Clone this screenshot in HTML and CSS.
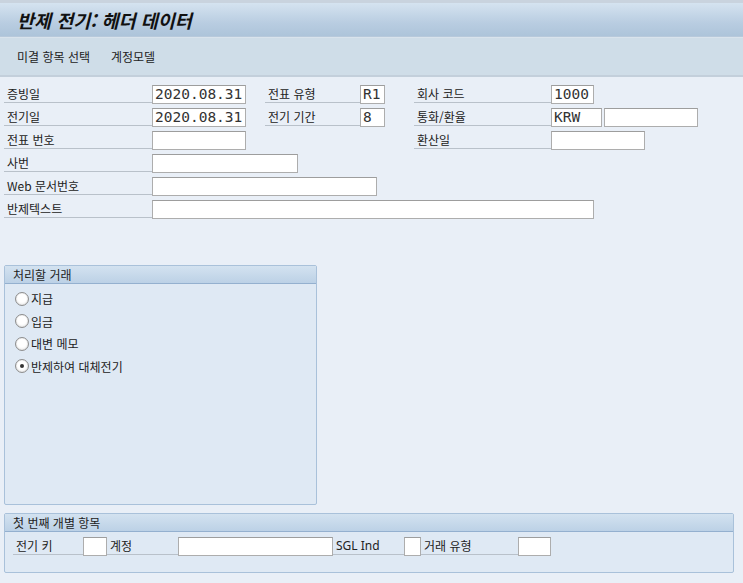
FILE: index.html
```html
<!DOCTYPE html>
<html lang="ko">
<head>
  <meta charset="UTF-8" />
  <title>반제 전기: 헤더 데이터</title>
  <link rel="stylesheet" href="styles.css">
</head>
<body>
  <div class="titlebar">
    <h1>반제 전기: 헤더 데이터</h1>
  </div>
  <div class="toolbar">
    <span class="tool">미결 항목 선택</span>
    <span class="tool">계정모델</span>
  </div>

  <div class="form">
    <div class="row">
      <span class="lbl w148">증빙일</span>
      <span class="field w94">2020.08.31</span>
      <span class="gap19"></span>
      <span class="lbl w96">전표 유형</span>
      <span class="field w25">R1</span>
      <span class="gap29"></span>
      <span class="lbl w138">회사 코드</span>
      <span class="field w43">1000</span>
    </div>
    <div class="row">
      <span class="lbl w148">전기일</span>
      <span class="field w94">2020.08.31</span>
      <span class="gap19"></span>
      <span class="lbl w96">전기 기간</span>
      <span class="field w25">8</span>
      <span class="gap29"></span>
      <span class="lbl w138">통화/환율</span>
      <span class="field w51">KRW</span>
      <span class="field w94 ml2"></span>
    </div>
    <div class="row">
      <span class="lbl w148">전표 번호</span>
      <span class="field w94"></span>
      <span class="gap168"></span>
      <span class="lbl w138">환산일</span>
      <span class="field w94"></span>
    </div>
    <div class="row">
      <span class="lbl w148">사번</span>
      <span class="field w146"></span>
    </div>
    <div class="row">
      <span class="lbl w148">Web 문서번호</span>
      <span class="field w225"></span>
    </div>
    <div class="row">
      <span class="lbl w148">반제텍스트</span>
      <span class="field w442"></span>
    </div>
  </div>

  <div class="group group-tx">
    <div class="group-head">처리할 거래</div>
    <div class="group-body radios">
      <label class="radio"><span class="dot"></span>지급</label>
      <label class="radio"><span class="dot"></span>입금</label>
      <label class="radio"><span class="dot"></span>대변 메모</label>
      <label class="radio"><span class="dot on"></span>반제하여 대체전기</label>
    </div>
  </div>

  <div class="group group-item">
    <div class="group-head">첫 번째 개별 항목</div>
    <div class="group-body">
      <div class="row item-row">
        <span class="lbl w70">전기 키</span>
        <span class="field w24"></span>
        <span class="lbl w71">계정</span>
        <span class="field w155"></span>
        <span class="lbl w71 latin">SGL Ind</span>
        <span class="field w17"></span>
        <span class="lbl w97">거래 유형</span>
        <span class="field w33"></span>
      </div>
    </div>
  </div>
</body>
</html>
```

FILE: styles.css
```css
body {
  margin: 0;
  font-family: "Noto Sans CJK KR", "Noto Sans", sans-serif;
  font-size: 12px;
  color: #222;
  background: #e9eff7;
  height: 583px;
  overflow: hidden;
}

.titlebar {
  border-top: 3px solid #c9d3de;
  height: 33px;
  background: linear-gradient(#d5e3f0, #b9cde1 60%, #adc4da);
  border-bottom: 1px solid #b7c9db;
  display: flex;
  align-items: center;
  padding-left: 17px;
}
.titlebar h1 {
  margin: 0;
  font-size: 18.5px;
  font-weight: bold;
  font-style: italic;
  color: #111;
}

.toolbar {
  height: 37px;
  background: #cfdde8;
  border-top: 1px solid #d9e3ec;
  border-bottom: 2px solid #c3cfdb;
  display: flex;
  align-items: center;
  padding-left: 17px;
  gap: 21px;
}
.tool {
  color: #222;
}

.form {
  padding: 8px 0 0 4px;
  display: flex;
  flex-direction: column;
  gap: 5px;
}
.row {
  display: flex;
  align-items: flex-end;
  height: 18px;
}
.lbl {
  box-sizing: border-box;
  height: 18px;
  line-height: 17px;
  padding-left: 3px;
  border-bottom: 1px solid #b9c1ca;
  white-space: nowrap;
}
.latin {
  font-family: "Noto Sans", sans-serif;
}
.field {
  box-sizing: border-box;
  height: 19px;
  margin-bottom: -1px;
  background: #fff;
  border: 1px solid #adadad;
  border-top-color: #9d9d9d;
  font-family: "DejaVu Sans Mono", monospace;
  font-size: 14.5px;
  line-height: 17px;
  padding-left: 2px;
  color: #333;
  overflow: hidden;
}

.w148 { width: 148px; }
.w138 { width: 137px; }
.w96 { width: 95px; }
.w97 { width: 97px; }
.w71 { width: 71px; }
.w70 { width: 70px; }
.w94 { width: 94px; }
.w25 { width: 25px; }
.w24 { width: 24px; }
.w17 { width: 17px; }
.w33 { width: 33px; }
.w43 { width: 43px; }
.w51 { width: 51px; }
.w146 { width: 146px; }
.w155 { width: 155px; }
.w225 { width: 225px; }
.w442 { width: 442px; }
.ml2 { margin-left: 2px; }
.gap19 { width: 19px; }
.gap29 { width: 29px; }
.gap168 { width: 168px; }

.group {
  margin-left: 4px;
  border: 1px solid #a9c1da;
  border-radius: 2px;
  background: #dfe9f4;
  box-sizing: border-box;
}
.group-head {
  height: 17px;
  line-height: 17px;
  padding-left: 8px;
  background: linear-gradient(#d3e2f0, #bcd1e6);
  border-bottom: 1px solid #94b0cf;
  color: #222;
}
.group-tx {
  margin-top: 47px;
  width: 313px;
  height: 240px;
}
.group-item {
  margin-top: 8px;
  width: 730px;
  height: 60px;
}

.radios {
  display: flex;
  flex-direction: column;
  gap: 5.5px;
  padding: 6px 0 0 10px;
}
.radio {
  display: flex;
  align-items: center;
  height: 17px;
  gap: 2px;
}
.dot {
  box-sizing: border-box;
  width: 14px;
  height: 14px;
  border-radius: 50%;
  border: 1px solid #8e8e8e;
  background: radial-gradient(circle at 50% 40%, #ffffff 45%, #e2e2e2 100%);
  box-shadow: inset 0 0 1px #bbb;
  position: relative;
}
.dot.on::after {
  content: "";
  position: absolute;
  left: 4px;
  top: 4px;
  width: 4px;
  height: 4px;
  border-radius: 50%;
  background: #333;
}

.item-row {
  padding: 4px 0 0 8px;
  height: 19px;
}
```
